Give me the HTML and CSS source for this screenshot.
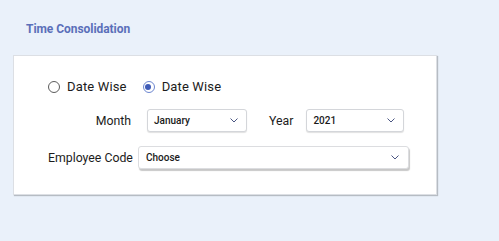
FILE: index.html
```html
<!DOCTYPE html>
<html>
<head>
<meta charset="utf-8">
<link rel="stylesheet" href="styles.css">
</head>
<body>
<div class="page">
  <h1 class="title">Time Consolidation</h1>
  <div class="card">
    <div class="radio-row">
      <label class="radio"><span class="dot"></span><span class="radio-text">Date Wise</span></label>
      <label class="radio checked"><span class="dot"></span><span class="radio-text">Date Wise</span></label>
    </div>
    <div class="row row-month">
      <span class="label label-month">Month</span>
      <div class="select select-month"><span class="value">January</span><svg class="chev" width="8" height="5" viewBox="0 0 8 5"><path d="M0.5 0.5 L4 4 L7.5 0.5" fill="none" stroke="#4b5682" stroke-width="1"/></svg></div>
      <span class="label label-year">Year</span>
      <div class="select select-year"><span class="value">2021</span><svg class="chev" width="8" height="5" viewBox="0 0 8 5"><path d="M0.5 0.5 L4 4 L7.5 0.5" fill="none" stroke="#4b5682" stroke-width="1"/></svg></div>
    </div>
    <div class="row row-emp">
      <span class="label label-emp">Employee Code</span>
      <div class="select select-emp"><span class="value">Choose</span><svg class="chev" width="8" height="5" viewBox="0 0 8 5"><path d="M0.5 0.5 L4 4 L7.5 0.5" fill="none" stroke="#4b5682" stroke-width="1"/></svg></div>
    </div>
  </div>
</div>
</body>
</html>
```
FILE: styles.css
```css
html, body {
  margin: 0;
  padding: 0;
}
body {
  background: #eaf1fa;
  font-family: Roboto, "Liberation Sans", sans-serif;
  color: #1c1c1c;
  width: 499px;
  height: 241px;
  overflow: hidden;
}
.page {
  padding: 21px 0 0 13px;
}
.title {
  margin: 0 0 17px 13px;
  font-size: 12px;
  line-height: 17px;
  font-weight: 700;
  color: #5a6fb9;
  letter-spacing: -0.05px;
}
.card {
  box-sizing: border-box;
  width: 424px;
  height: 140px;
  background: #fff;
  border: 1px solid #dcdfe4;
  box-shadow: 1px 1px 1px rgba(0, 0, 0, 0.22);
  padding: 23px 0 0 34px;
}
.radio-row {
  display: flex;
  align-items: center;
  height: 16px;
}
.radio {
  display: flex;
  align-items: center;
  margin-right: 16px;
}
.dot {
  box-sizing: border-box;
  width: 12px;
  height: 12px;
  border-radius: 50%;
  border: 1px solid #5c5c5c;
  margin-right: 7px;
  position: relative;
}
.checked .dot {
  border: 1.5px solid #6c86d0;
}
.checked .dot::after {
  content: "";
  position: absolute;
  left: 1.5px;
  top: 1.5px;
  width: 6px;
  height: 6px;
  border-radius: 50%;
  background: #3e5bb7;
}
.radio-text {
  font-size: 13px;
  line-height: 16px;
  letter-spacing: 0.15px;
}
.row {
  display: flex;
  align-items: center;
}
.row-month {
  margin-top: 14px;
}
.row-emp {
  margin-top: 14px;
}
.label {
  font-size: 12.3px;
  line-height: 16px;
}
.label-month {
  width: 83px;
  text-align: right;
  margin-right: 16px;
}
.label-year {
  margin-left: 22px;
  margin-right: 13px;
}
.label-emp {
  width: 83px;
  margin-right: 7px;
  white-space: nowrap;
}
.select {
  box-sizing: border-box;
  height: 23px;
  display: flex;
  align-items: center;
  justify-content: space-between;
  background: #fff;
  border: 1px solid #d4d6da;
  border-radius: 3px;
  box-shadow: 0 1px 1px rgba(0, 0, 0, 0.12);
  padding: 0 8px 0 6px;
}
.select-month {
  width: 100px;
}
.select-year {
  width: 98px;
}
.select-emp {
  width: 271px;
  border-color: #dcdde0;
  box-shadow: 1px 2px 1px rgba(0, 0, 0, 0.22);
  padding-left: 7px;
  padding-right: 9px;
}
.value {
  font-size: 10px;
  font-weight: 500;
  color: #1a1a1a;
}
.chev {
  display: block;
}
```
